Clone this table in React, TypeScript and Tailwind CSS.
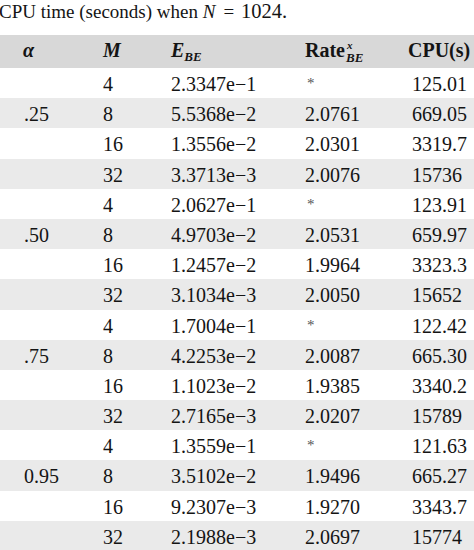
const groups = [
  {
    alpha: ".25",
    rows: [
      ["4", "2.3347e−1", "*", "125.01"],
      ["8", "5.5368e−2", "2.0761", "669.05"],
      ["16", "1.3556e−2", "2.0301", "3319.7"],
      ["32", "3.3713e−3", "2.0076", "15736"],
    ],
  },
  {
    alpha: ".50",
    rows: [
      ["4", "2.0627e−1", "*", "123.91"],
      ["8", "4.9703e−2", "2.0531", "659.97"],
      ["16", "1.2457e−2", "1.9964", "3323.3"],
      ["32", "3.1034e−3", "2.0050", "15652"],
    ],
  },
  {
    alpha: ".75",
    rows: [
      ["4", "1.7004e−1", "*", "122.42"],
      ["8", "4.2253e−2", "2.0087", "665.30"],
      ["16", "1.1023e−2", "1.9385", "3340.2"],
      ["32", "2.7165e−3", "2.0207", "15789"],
    ],
  },
  {
    alpha: "0.95",
    rows: [
      ["4", "1.3559e−1", "*", "121.63"],
      ["8", "3.5102e−2", "1.9496", "665.27"],
      ["16", "9.2307e−3", "1.9270", "3343.7"],
      ["32", "2.1988e−3", "2.0697", "15774"],
    ],
  },
];

const cols = "grid grid-cols-[103px_68px_134px_107px_1fr]";

export default function App() {
  const rows = groups.flatMap((g) =>
    g.rows.map((r, i) => ({ alpha: i === 1 ? g.alpha : "", cells: r }))
  );

  return (
    <div className="w-[474px] h-[550px] overflow-hidden bg-white text-[#141414] font-['Liberation_Serif',serif]">
      {/* caption */}
      <div className="h-[35px] ml-[-1px] text-[19px] leading-[23px] whitespace-nowrap">
        CPU time (seconds) when <i>N</i>
        <span className="ml-[8px] mr-[7px]">=</span>
        <span className="text-[20.5px]">1024.</span>
      </div>

      {/* header */}
      <div className={`${cols} h-[33px] pt-[4px] bg-[#d8d8d8] text-[20px] leading-[23px] font-bold`}>
        <div className="pl-[23px] italic">α</div>
        <div className="italic">M</div>
        <div className="italic">
          E<span className="text-[13px] relative top-[4px]">BE</span>
        </div>
        <div className="flex items-start h-[23px]">
          <span>Rate</span>
          <span className="flex flex-col ml-[1px] italic">
            <span className="text-[11px] leading-[11px] mt-[1px] pl-[1px]">x</span>
            <span className="text-[13px] leading-[13px]">BE</span>
          </span>
        </div>
        <div className="ml-[-4px]">CPU(s)</div>
      </div>

      {/* body */}
      {rows.map((r, i) => (
        <div
          key={i}
          className={`${cols} h-[30.2px] pt-[5px] text-[20px] leading-[23px] ${
            i % 2 === 1 ? "bg-[#eaeaea]" : "bg-white"
          }`}
        >
          <div className="pl-[24px]">{r.alpha}</div>
          <div>{r.cells[0]}</div>
          <div>{r.cells[1]}</div>
          <div>
            {r.cells[2] === "*" ? (
              <span className="text-[15px] relative top-[-3px] ml-[2px] text-[#555]">*</span>
            ) : (
              r.cells[2]
            )}
          </div>
          <div>{r.cells[3]}</div>
        </div>
      ))}
    </div>
  );
}
